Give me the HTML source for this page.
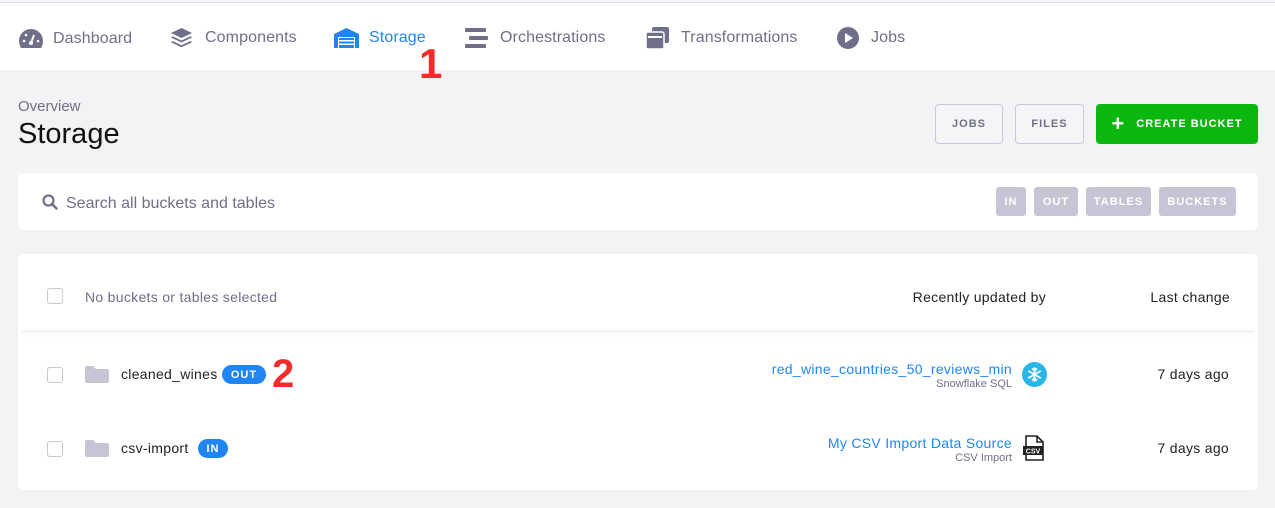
<!DOCTYPE html>
<html><head><style>
*{box-sizing:border-box;margin:0;padding:0}
body{width:1275px;height:508px;background:#f3f3f6;font-family:"Liberation Sans",sans-serif;position:relative;overflow:hidden;color:#222}
.nav{position:absolute;left:0;top:2px;width:1275px;height:68px;background:#fff;border-top:1px solid #dde3ee}
.ni{position:absolute;font-size:16px;color:#6f6f89;display:flex;align-items:center;letter-spacing:0.1px}
.ni svg{margin-right:12px}
.abs{position:absolute}
.btn{position:absolute;top:104px;height:40px;border:1px solid #c9c9d9;border-radius:4px;font-size:11px;font-weight:bold;letter-spacing:1px;color:#6f6f89;display:flex;align-items:center;justify-content:center;background:#f5f5f8}
.card{position:absolute;left:18px;width:1240px;background:#fff;border-radius:6px}
.tag{position:absolute;top:187px;height:29px;background:#c5c5d6;border-radius:3px;color:#fff;font-size:11px;font-weight:bold;letter-spacing:1px;display:flex;align-items:center;justify-content:center}
.cb{position:absolute;width:16px;height:16px;border:1px solid #c9c9d0;border-radius:3px;background:#fff}
.pill{position:absolute;height:19px;background:#1f85f5;color:#fff;border-radius:10px;font-size:11px;font-weight:bold;letter-spacing:1px;display:flex;align-items:center;justify-content:center}
.red{position:absolute;color:#f52a2a;font-weight:bold;font-size:40px}
.t14{font-size:14px;letter-spacing:0.3px}
</style></head><body>
<div class="nav"></div>
<div class="ni" style="left:18px;top:28px"><svg width="26" height="22" viewBox="0 0 26 22"><path d="M13 1A12 12 0 0 0 1 13c0 3 1 5 2 7h20c1-2 2-4 2-7A12 12 0 0 0 13 1z" fill="#6f6f89"/><circle cx="13" cy="15" r="2" fill="#fff"/><path d="M13 15l3-8" stroke="#fff" stroke-width="2"/><circle cx="6" cy="13" r="1.3" fill="#fff"/><circle cx="8" cy="7" r="1.3" fill="#fff"/><circle cx="20" cy="13" r="1.3" fill="#fff"/></svg><span style="margin-left:-3px">Dashboard</span></div>
<div class="ni" style="left:170px;top:27px"><svg width="23" height="22" viewBox="0 0 23 22"><path d="M11.5 1L22 6l-10.5 5L1 6z" fill="#6f6f89"/><path d="M2.5 9.3l9 4.2 9-4.2 1.5 1.2-10.5 5L1 10.5z" fill="#6f6f89"/><path d="M2.5 14l9 4.2 9-4.2 1.5 1.2-10.5 5L1 15.2z" fill="#6f6f89"/></svg>Components</div>
<div class="ni" style="left:334px;top:28px;color:#1f85f5"><svg width="25" height="20" viewBox="0 0 25 20"><path d="M0 6L12.5 0 25 6v14h-4V9H4v11H0z" fill="#1f85f5"/><rect x="5" y="10" width="15" height="2" fill="#1f85f5"/><rect x="5" y="13.5" width="15" height="2" fill="#1f85f5"/><rect x="5" y="17" width="15" height="3" fill="#1f85f5"/></svg><span style="margin-left:-2px">Storage</span></div>
<div class="red" style="left:419px;top:40px;font-size:42px">1</div>
<div class="ni" style="left:465px;top:28px"><svg width="23" height="20" viewBox="0 0 23 20"><rect x="0" y="0" width="21" height="4" rx="1" fill="#6f6f89"/><rect x="4" y="8" width="19" height="4" rx="1" fill="#6f6f89"/><rect x="0" y="16" width="21" height="4" rx="1" fill="#6f6f89"/></svg>Orchestrations</div>
<div class="ni" style="left:646px;top:27px"><svg width="23" height="22" viewBox="0 0 23 22"><rect x="6" y="0" width="17" height="16" rx="2" fill="#6f6f89"/><rect x="0" y="5" width="18" height="17" rx="2" fill="#6f6f89" stroke="#fff" stroke-width="1.5"/><rect x="2" y="9" width="14" height="2" fill="#fff"/></svg>Transformations</div>
<div class="ni" style="left:837px;top:27px"><svg width="22" height="22" viewBox="0 0 22 22"><circle cx="11" cy="11" r="11" fill="#6f6f89"/><path d="M8 6l8 5-8 5z" fill="#fff"/></svg>Jobs</div>

<div class="abs" style="left:18px;top:98px;font-size:15px;color:#6f6f89">Overview</div>
<div class="abs" style="left:18px;top:118px;font-size:29px;color:#111">Storage</div>
<div class="btn" style="left:935px;width:68px">JOBS</div>
<div class="btn" style="left:1015px;width:69px">FILES</div>
<div class="btn" style="left:1096px;width:162px;background:#0bb60f;border-color:#0bb60f;color:#fff"><span style="font-size:22px;font-weight:bold;margin-right:12px;letter-spacing:0">+</span>CREATE BUCKET</div>

<div class="card" style="top:173px;height:57px"></div>
<svg class="abs" style="left:42px;top:194px" width="16" height="16" viewBox="0 0 16 16"><circle cx="6.5" cy="6.5" r="5" fill="none" stroke="#6f6f89" stroke-width="2.2"/><path d="M10 10l4.5 4.5" stroke="#6f6f89" stroke-width="2.5" stroke-linecap="round"/></svg>
<div class="abs" style="left:66px;top:195px;font-size:16px;color:#6f6f89">Search all buckets and tables</div>
<div class="tag" style="left:996px;width:30px">IN</div>
<div class="tag" style="left:1034px;width:44px">OUT</div>
<div class="tag" style="left:1086px;width:65px">TABLES</div>
<div class="tag" style="left:1159px;width:77px">BUCKETS</div>

<div class="card" style="top:254px;height:236px"></div>
<div class="abs" style="left:22px;top:331px;width:1232px;height:1px;box-shadow:0 1px 4px rgba(0,0,0,.12);background:#eee"></div>
<div class="cb" style="left:47px;top:288px"></div>
<div class="abs t14" style="left:85px;top:289px;color:#6f6f89">No buckets or tables selected</div>
<div class="abs t14" style="right:229px;top:289px;color:#222">Recently updated by</div>
<div class="abs t14" style="right:45px;top:289px;color:#222">Last change</div>

<div class="cb" style="left:47px;top:367px"></div>
<svg class="abs" style="left:85px;top:366px" width="24" height="17" viewBox="0 0 24 17"><path d="M0 2a2 2 0 0 1 2-2h6l3 3h11a2 2 0 0 1 2 2v10a2 2 0 0 1-2 2H2a2 2 0 0 1-2-2z" fill="#c5c5d6"/></svg>
<div class="abs t14" style="left:121px;top:366px">cleaned_wines</div>
<div class="pill" style="left:222px;top:365px;width:44px">OUT</div>
<div class="red" style="left:272px;top:352px">2</div>
<div class="abs t14" style="right:263px;top:361px;color:#1f85f5">red_wine_countries_50_reviews_min</div>
<div class="abs" style="right:263px;top:378px;font-size:11px;color:#6f6f89">Snowflake SQL</div>
<svg class="abs" style="left:1022px;top:362px" width="25" height="25" viewBox="0 0 25 25"><circle cx="12.5" cy="12.5" r="12.5" fill="#29b5e8"/><g stroke="#fff" stroke-width="1.8" stroke-linecap="round" fill="none"><path d="M12.5 6v13M6.9 9.25l11.2 6.5M6.9 15.75l11.2-6.5"/><path d="M10.5 7l2 1.5 2-1.5M10.5 18l2-1.5 2 1.5"/></g></svg>
<div class="abs t14" style="right:46px;top:366px">7 days ago</div>

<div class="cb" style="left:47px;top:441px"></div>
<svg class="abs" style="left:85px;top:440px" width="24" height="17" viewBox="0 0 24 17"><path d="M0 2a2 2 0 0 1 2-2h6l3 3h11a2 2 0 0 1 2 2v10a2 2 0 0 1-2 2H2a2 2 0 0 1-2-2z" fill="#c5c5d6"/></svg>
<div class="abs t14" style="left:121px;top:440px">csv-import</div>
<div class="pill" style="left:198px;top:439px;width:30px">IN</div>
<div class="abs t14" style="right:263px;top:435px;color:#1f85f5">My CSV Import Data Source</div>
<div class="abs" style="right:263px;top:452px;font-size:11px;color:#6f6f89">CSV Import</div>
<svg class="abs" style="left:1022px;top:435px" width="24" height="27" viewBox="0 0 24 27"><path d="M4 1h11l6 6v18H4z" fill="#fff" stroke="#222" stroke-width="1.6"/><path d="M15 1v6h6" fill="none" stroke="#222" stroke-width="1.6"/><rect x="1" y="11" width="20" height="9" fill="#222"/><text x="11" y="18.5" font-size="7" font-weight="bold" fill="#fff" text-anchor="middle" font-family="Liberation Sans">CSV</text></svg>
<div class="abs t14" style="right:46px;top:440px">7 days ago</div>
</body></html>
